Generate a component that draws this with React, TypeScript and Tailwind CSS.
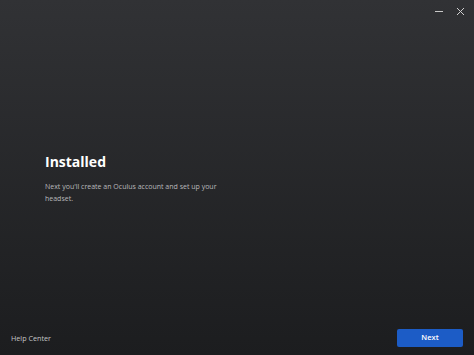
export default function App() {
  return (
    <div
      className="relative flex h-[355px] w-[474px] flex-col bg-gradient-to-b from-[#313235] to-[#1c1d1f] text-white"
      style={{ fontFamily: '"Open Sans", "Noto Sans", sans-serif' }}
    >
      {/* Window controls */}
      <div className="flex h-[22px] items-center justify-end gap-[13px] pr-[8px]">
        <div className="h-[1px] w-[8px] bg-[#c8c8c8]" />
        <svg width="9" height="9" viewBox="0 0 9 9" className="mr-[1px]">
          <path d="M1 1L8 8M8 1L1 8" stroke="#d0d0d0" strokeWidth="1" />
        </svg>
      </div>

      {/* Content */}
      <div className="flex flex-1 flex-col justify-center pl-[45px] pt-[6px]">
        <h1 className="text-[14px] font-bold leading-[20px] text-white">Installed</h1>
        <p className="mt-[9px] w-[200px] text-[7px] leading-[12px] text-[#b9b9bb]">
          Next you'll create an Oculus account and set up your headset.
        </p>
      </div>

      {/* Footer */}
      <div className="flex items-center justify-between pb-[8px] pl-[11px] pr-[11px]">
        <span className="text-[7.2px] text-[#c4c4c6]">Help Center</span>
        <button className="h-[18px] w-[66px] rounded-[2px] bg-[#1c5cc6] text-[7.5px] font-semibold text-white">
          Next
        </button>
      </div>
    </div>
  );
}
